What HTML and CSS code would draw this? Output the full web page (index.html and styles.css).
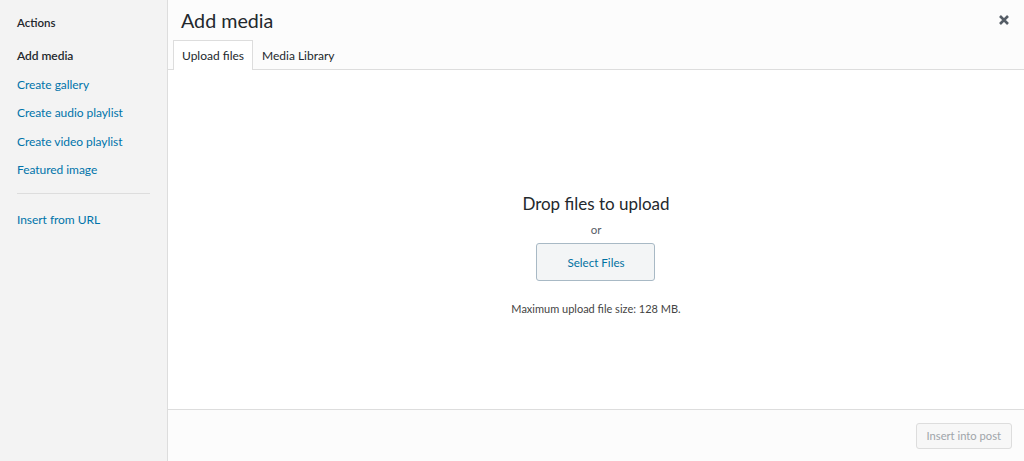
FILE: index.html
```html
<!DOCTYPE html>
<html lang="en">
<head>
    <meta charset="UTF-8">
    <title>Add media</title>
    <link rel="stylesheet" href="styles.css">
</head>
<body>
    <div class="media-modal">
        <div class="media-menu">
            <div class="menu-title">Actions</div>
            <div class="menu-item active">Add media</div>
            <div class="menu-item">Create gallery</div>
            <div class="menu-item">Create audio playlist</div>
            <div class="menu-item">Create video playlist</div>
            <div class="menu-item">Featured image</div>
            <div class="separator"></div>
            <div class="menu-item">Insert from URL</div>
        </div>

        <div class="media-frame">
            <div class="frame-header">
                <h1>Add media</h1>
                <div class="close-button">
                    <svg width="12" height="12" viewBox="0 0 12 12">
                        <path d="M2 2 L10 10 M10 2 L2 10" stroke="#555d66" stroke-width="2.6" stroke-linecap="butt"/>
                    </svg>
                </div>
            </div>
            <div class="tabs">
                <div class="tab active">Upload files</div>
                <div class="tab">Media Library</div>
            </div>
            <div class="frame-content">
                <div class="upload-box">
                    <div class="drop-text">Drop files to upload</div>
                    <div class="or-text">or</div>
                    <div class="select-button">Select Files</div>
                    <div class="max-size">Maximum upload file size: 128 MB.</div>
                </div>
            </div>
            <div class="frame-footer">
                <div class="insert-button">Insert into post</div>
            </div>
        </div>
    </div>
</body>
</html>
```

FILE: styles.css
```css
html, body {
    margin: 0;
    padding: 0;
    height: 100%;
}

body {
    font-family: Lato, "Noto Sans", sans-serif;
    font-size: 12px;
    color: #23282d;
    background-color: #fcfcfc;
}

.media-modal {
    display: flex;
    height: 461px;
    width: 1024px;
}

.media-menu {
    width: 168px;
    background-color: #f3f3f3;
    border-right: 1px solid #dddddd;
    box-sizing: border-box;
    padding: 13px 17px 0 17px;
}

.menu-title {
    font-size: 11.5px;
    font-weight: 600;
    color: #23282d;
    height: 20px;
    line-height: 20px;
    margin-bottom: 13px;
}

.menu-item {
    height: 28.5px;
    line-height: 20px;
    color: #0073aa;
    font-size: 12px;
    letter-spacing: -0.05px;
}

.menu-item.active {
    color: #23282d;
    font-weight: 600;
}

.separator {
    border-top: 1px solid #dddddd;
    margin: 4px 0 16px 0;
    width: 133px;
}

.media-frame {
    flex: 1;
    display: flex;
    flex-direction: column;
}

.frame-header {
    display: flex;
    justify-content: space-between;
    align-items: center;
    height: 40px;
    padding: 0 14px 0 13px;
}

.frame-header h1 {
    margin: 0;
    font-size: 19.7px;
    font-weight: 400;
    color: #23282d;
}

.close-button {
    display: flex;
    align-items: center;
}

.tabs {
    display: flex;
    height: 29px;
    padding-left: 5px;
    border-bottom: 1px solid #dddddd;
}

.tab {
    padding: 0 8px;
    line-height: 29px;
    color: #23282d;
    font-size: 12px;
    border: 1px solid transparent;
    border-bottom: none;
}

.tab.active {
    background-color: #ffffff;
    border-color: #dddddd;
    margin-bottom: -1px;
    line-height: 30px;
}

.frame-content {
    flex: 1;
    background-color: #ffffff;
    border-bottom: 1px solid #dddddd;
    display: flex;
    justify-content: center;
}

.upload-box {
    display: flex;
    flex-direction: column;
    align-items: center;
    padding-top: 121px;
}

.drop-text {
    font-size: 17px;
    line-height: 26px;
    color: #23282d;
}

.or-text {
    font-size: 11.5px;
    line-height: 16px;
    color: #555d66;
    margin-top: 5px;
}

.select-button {
    margin-top: 5px;
    width: 119px;
    height: 38px;
    box-sizing: border-box;
    border: 1px solid #a8b9c5;
    border-radius: 3px;
    background-color: #f3f5f6;
    color: #0071a1;
    font-size: 11.6px;
    display: flex;
    align-items: center;
    justify-content: center;
}

.max-size {
    margin-top: 21px;
    font-size: 11px;
    color: #444444;
}

.frame-footer {
    height: 51px;
    display: flex;
    justify-content: flex-end;
    align-items: center;
    padding-right: 12px;
}

.insert-button {
    border: 1px solid #dddddd;
    border-radius: 3px;
    background-color: #f7f7f7;
    color: #a0a5aa;
    font-size: 11.2px;
    height: 26px;
    line-height: 24px;
    padding: 0 10px;
    box-sizing: border-box;
}
```
